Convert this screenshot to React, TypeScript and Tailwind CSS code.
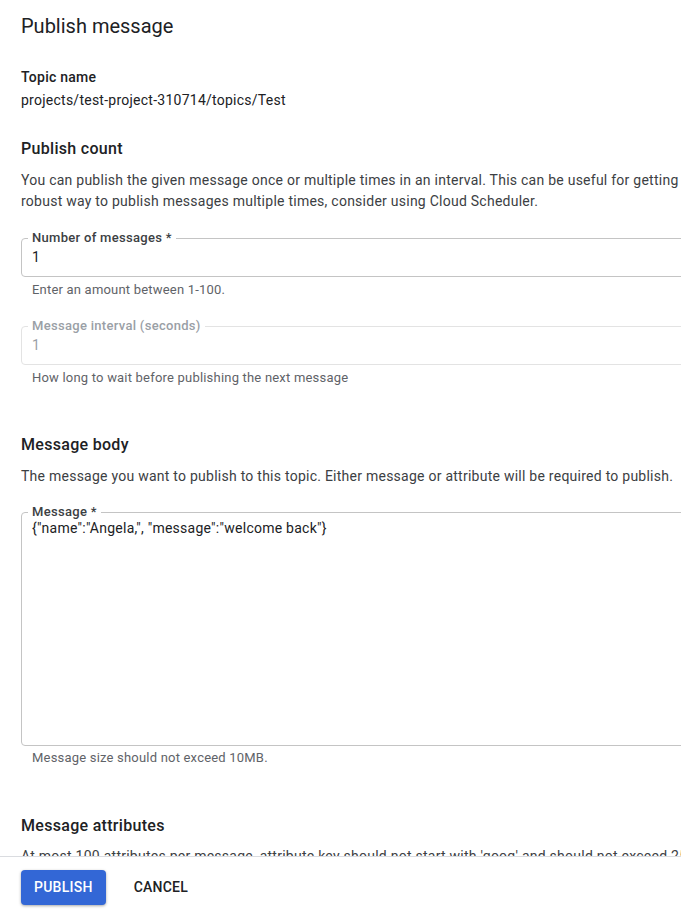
import React from "react";

type OutlinedFieldProps = {
  label: string;
  value: string;
  helper: string;
  disabled?: boolean;
};

function OutlinedField({ label, value, helper, disabled = false }: OutlinedFieldProps) {
  return (
    <div>
      <fieldset
        className={`m-0 min-w-0 rounded-[4px] border pl-[6px] pr-3 ${
          disabled ? "border-[#e3e3e3]" : "border-[#c4c4c4]"
        }`}
      >
        <legend
          className={`px-1 text-[13px] leading-4 font-medium tracking-[0.3px] ${
            disabled ? "text-[#9aa0a6]" : "text-[#3c4043]"
          }`}
        >
          {label}
        </legend>
        <div
          className={`pl-1 pt-px pb-[9px] text-[14px] leading-5 tracking-[0.25px] ${
            disabled ? "text-[#9aa0a6]" : "text-[#202124]"
          }`}
        >
          {value}
        </div>
      </fieldset>
      <p className="mt-[5px] pl-[11px] text-[13px] leading-4 tracking-[0.2px] text-[#5f6368]">{helper}</p>
    </div>
  );
}

export default function App() {
  return (
    <div
      className="flex h-[913px] w-[681px] flex-col overflow-hidden bg-white text-[#202124]"
      style={{ fontFamily: "Roboto, 'Liberation Sans', sans-serif" }}
    >
      <div className="min-h-0 flex-1 overflow-hidden">
        <div className="w-[780px] pl-[21px] pt-3">
          <h1 className="text-[20px] leading-7 font-normal">Publish message</h1>

          <div className="mt-[27px] tracking-[0.25px]">
            <p className="text-[14px] leading-5 font-medium">Topic name</p>
            <p className="mt-[3px] text-[14px] leading-5">projects/test-project-310714/topics/Test</p>
          </div>

          <section className="mt-[27px]">
            <h2 className="text-[16px] leading-6 font-medium tracking-[0.3px]">Publish count</h2>
            <div className="mt-[9px] text-[14px] leading-[21px] tracking-[0.25px] text-[#3c4043]">
              <p className="whitespace-nowrap">
                You can publish the given message once or multiple times in an interval. This can be useful for getting
                started. For a more
              </p>
              <p className="whitespace-nowrap">
                robust way to publish messages multiple times, consider using Cloud Scheduler.
              </p>
            </div>

            <div className="mt-[18px]">
              <OutlinedField label="Number of messages *" value="1" helper="Enter an amount between 1-100." />
            </div>
            <div className="mt-5">
              <OutlinedField
                label="Message interval (seconds)"
                value="1"
                helper="How long to wait before publishing the next message"
                disabled
              />
            </div>
          </section>

          <section className="mt-[47px]">
            <h2 className="text-[16px] leading-6 font-medium tracking-[0.3px]">Message body</h2>
            <p className="mt-[9px] whitespace-nowrap text-[14px] leading-[21px] tracking-[0.25px] text-[#3c4043]">
              The message you want to publish to this topic. Either message or attribute will be required to publish.
            </p>

            <div className="mt-[17px]">
              <fieldset className="m-0 min-w-0 rounded-[4px] border border-[#c4c4c4] pl-[6px] pr-3">
                <legend className="px-1 text-[13px] leading-4 font-medium tracking-[0.3px] text-[#3c4043]">
                  Message *
                </legend>
                <div className="h-[225px] pl-[4px] text-[14px] leading-4 tracking-[0.25px] text-[#202124]">
                  {'{"name":"Angela,", "message":"welcome back"}'}
                </div>
              </fieldset>
              <p className="mt-1 pl-[11px] text-[13px] leading-4 tracking-[0.2px] text-[#5f6368]">
                Message size should not exceed 10MB.
              </p>
            </div>
          </section>

          <section className="mt-[48px]">
            <h2 className="text-[16px] leading-6 font-medium tracking-[0.3px]">Message attributes</h2>
            <p className="mt-2 whitespace-nowrap text-[14px] leading-[21px] tracking-[0.25px] text-[#3c4043]">
              At most 100 attributes per message, attribute key should not start with 'goog' and should not exceed 256
              bytes.
            </p>
          </section>
        </div>
      </div>

      <footer className="flex h-[57px] shrink-0 items-start gap-[14px] border-t border-[#dadce0] bg-white pl-[21px] pt-[13px]">
        <button
          type="button"
          className="h-[35px] rounded-[4px] bg-[#3367d6] px-[13px] text-[14px] font-medium tracking-[0.25px] text-white shadow-[0_1px_3px_rgba(0,0,0,0.35)]"
        >
          PUBLISH
        </button>
        <button
          type="button"
          className="h-[35px] rounded-[4px] px-[14px] text-[14px] font-medium tracking-[0.25px] text-[#202124]"
        >
          CANCEL
        </button>
      </footer>
    </div>
  );
}
